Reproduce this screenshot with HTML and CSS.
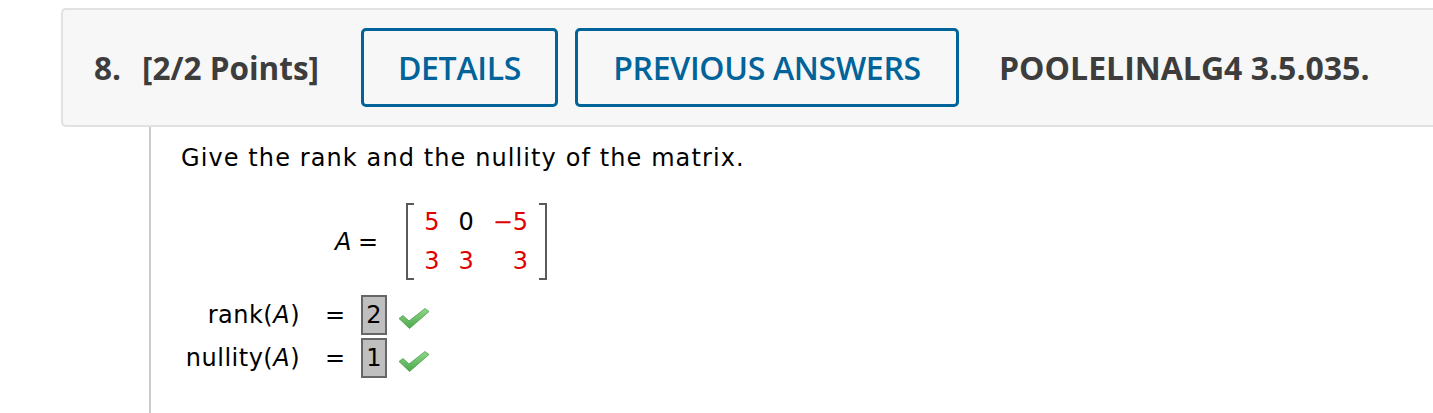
FILE: index.html
```html
<!DOCTYPE html>
<html>
<head>
<meta charset="utf-8">
<link rel="stylesheet" href="styles.css">
</head>
<body>
<div class="header">
  <span class="qnum">8.</span>
  <span class="points">[2/2 Points]</span>
  <button class="btn btn-details">DETAILS</button>
  <button class="btn btn-prev">PREVIOUS ANSWERS</button>
  <span class="code">POOLELINALG4 3.5.035.</span>
</div>
<div class="content">
  <p class="question">Give the rank and the nullity of the matrix.</p>
  <div class="matrix-row">
    <span class="lhs"><i>A</i> =</span>
    <span class="bracket bracket-left"></span>
    <div class="matrix">
      <span class="red">5</span><span>0</span><span class="red">&minus;5</span>
      <span class="red">3</span><span class="red">3</span><span class="red">3</span>
    </div>
    <span class="bracket bracket-right"></span>
  </div>
  <div class="answers">
    <span class="label">rank(<i>A</i>)</span>
    <span class="eq">=</span>
    <span class="ansbox">2</span>
    <svg class="check" viewBox="0 0 32 22" width="32" height="22">
      <defs>
        <linearGradient id="g1" x1="0" y1="0" x2="0" y2="1">
          <stop offset="0" stop-color="#8fd88a"/>
          <stop offset="1" stop-color="#4aa84a"/>
        </linearGradient>
      </defs>
      <path d="M1 11.5 L5 8.5 L11 14 L27 1.5 L31 4.5 L11.5 21.5 Z" fill="url(#g1)" stroke="#4f9e4f" stroke-width="0.8" stroke-linejoin="round"/>
    </svg>
    <span class="label">nullity(<i>A</i>)</span>
    <span class="eq">=</span>
    <span class="ansbox">1</span>
    <svg class="check" viewBox="0 0 32 22" width="32" height="22">
      <path d="M1 11.5 L5 8.5 L11 14 L27 1.5 L31 4.5 L11.5 21.5 Z" fill="url(#g1)" stroke="#4f9e4f" stroke-width="0.8" stroke-linejoin="round"/>
    </svg>
  </div>
</div>
</body>
</html>
```
FILE: styles.css
```css
html, body {
  margin: 0;
  padding: 0;
  background: #ffffff;
  overflow: hidden;
}
body {
  width: 1433px;
  height: 413px;
}
.header {
  margin: 8px 0 0 61px;
  height: 115px;
  box-sizing: content-box;
  border: 2px solid #e1e1e1;
  border-right: none;
  border-radius: 5px 0 0 5px;
  background: #f7f7f7;
  display: flex;
  align-items: center;
  padding-left: 31px;
  font-family: "Open Sans", sans-serif;
  color: #3d3d3d;
}
.qnum {
  font-weight: 700;
  font-size: 31.5px;
  margin-right: 21px;
}
.points {
  font-weight: 700;
  font-size: 31.5px;
  margin-right: 42px;
}
.btn {
  font-family: "Open Sans", sans-serif;
  font-weight: 600;
  font-size: 32px;
  color: #00639a;
  background: transparent;
  border: 3px solid #00639a;
  border-radius: 5px;
  height: 79px;
  padding: 0;
  margin: 0 17px 0 0;
  box-sizing: border-box;
  letter-spacing: -0.3px;
}
.btn-details { width: 197px; }
.btn-prev { width: 384px; margin-right: 40px; }
.code {
  font-weight: 700;
  font-size: 32px;
}
.content {
  margin-left: 149px;
  border-left: 2px solid #cccccc;
  height: 290px;
  padding-left: 30px;
  font-family: "DejaVu Sans", Verdana, sans-serif;
  font-size: 24px;
  color: #000;
}
.question {
  margin: 0;
  padding-top: 16px;
  line-height: 30px;
  letter-spacing: 1.1px;
}
.matrix-row {
  display: flex;
  align-items: center;
  margin-top: 30px;
  margin-left: 154px;
  height: 77px;
}
.lhs {
  margin-right: 28px;
  word-spacing: -1px;
}
.bracket {
  width: 8px;
  height: 77px;
  border: 2.5px solid #5a5a5a;
  box-sizing: border-box;
}
.bracket-left { border-right: none; }
.bracket-right { border-left: none; }
.matrix {
  display: grid;
  grid-template-columns: auto auto auto;
  column-gap: 19px;
  row-gap: 9px;
  padding: 0 11px 0 10px;
  text-align: right;
  line-height: 30px;
}
.red { color: #e00000; }
.answers {
  display: grid;
  grid-template-columns: 122px 61px 26px auto;
  row-gap: 3px;
  align-items: center;
  margin-top: 15px;
  margin-left: -3px;
}
.label {
  text-align: right;
  letter-spacing: 0.5px;
}
.eq {
  text-align: center;
  padding-left: 9px;
}
.ansbox {
  width: 26px;
  height: 40px;
  box-sizing: border-box;
  border: 2px solid #666;
  background: #bfbfbf;
  text-align: center;
  line-height: 36px;
}
.check {
  margin-left: 11px;
  margin-top: 6px;
}
```
